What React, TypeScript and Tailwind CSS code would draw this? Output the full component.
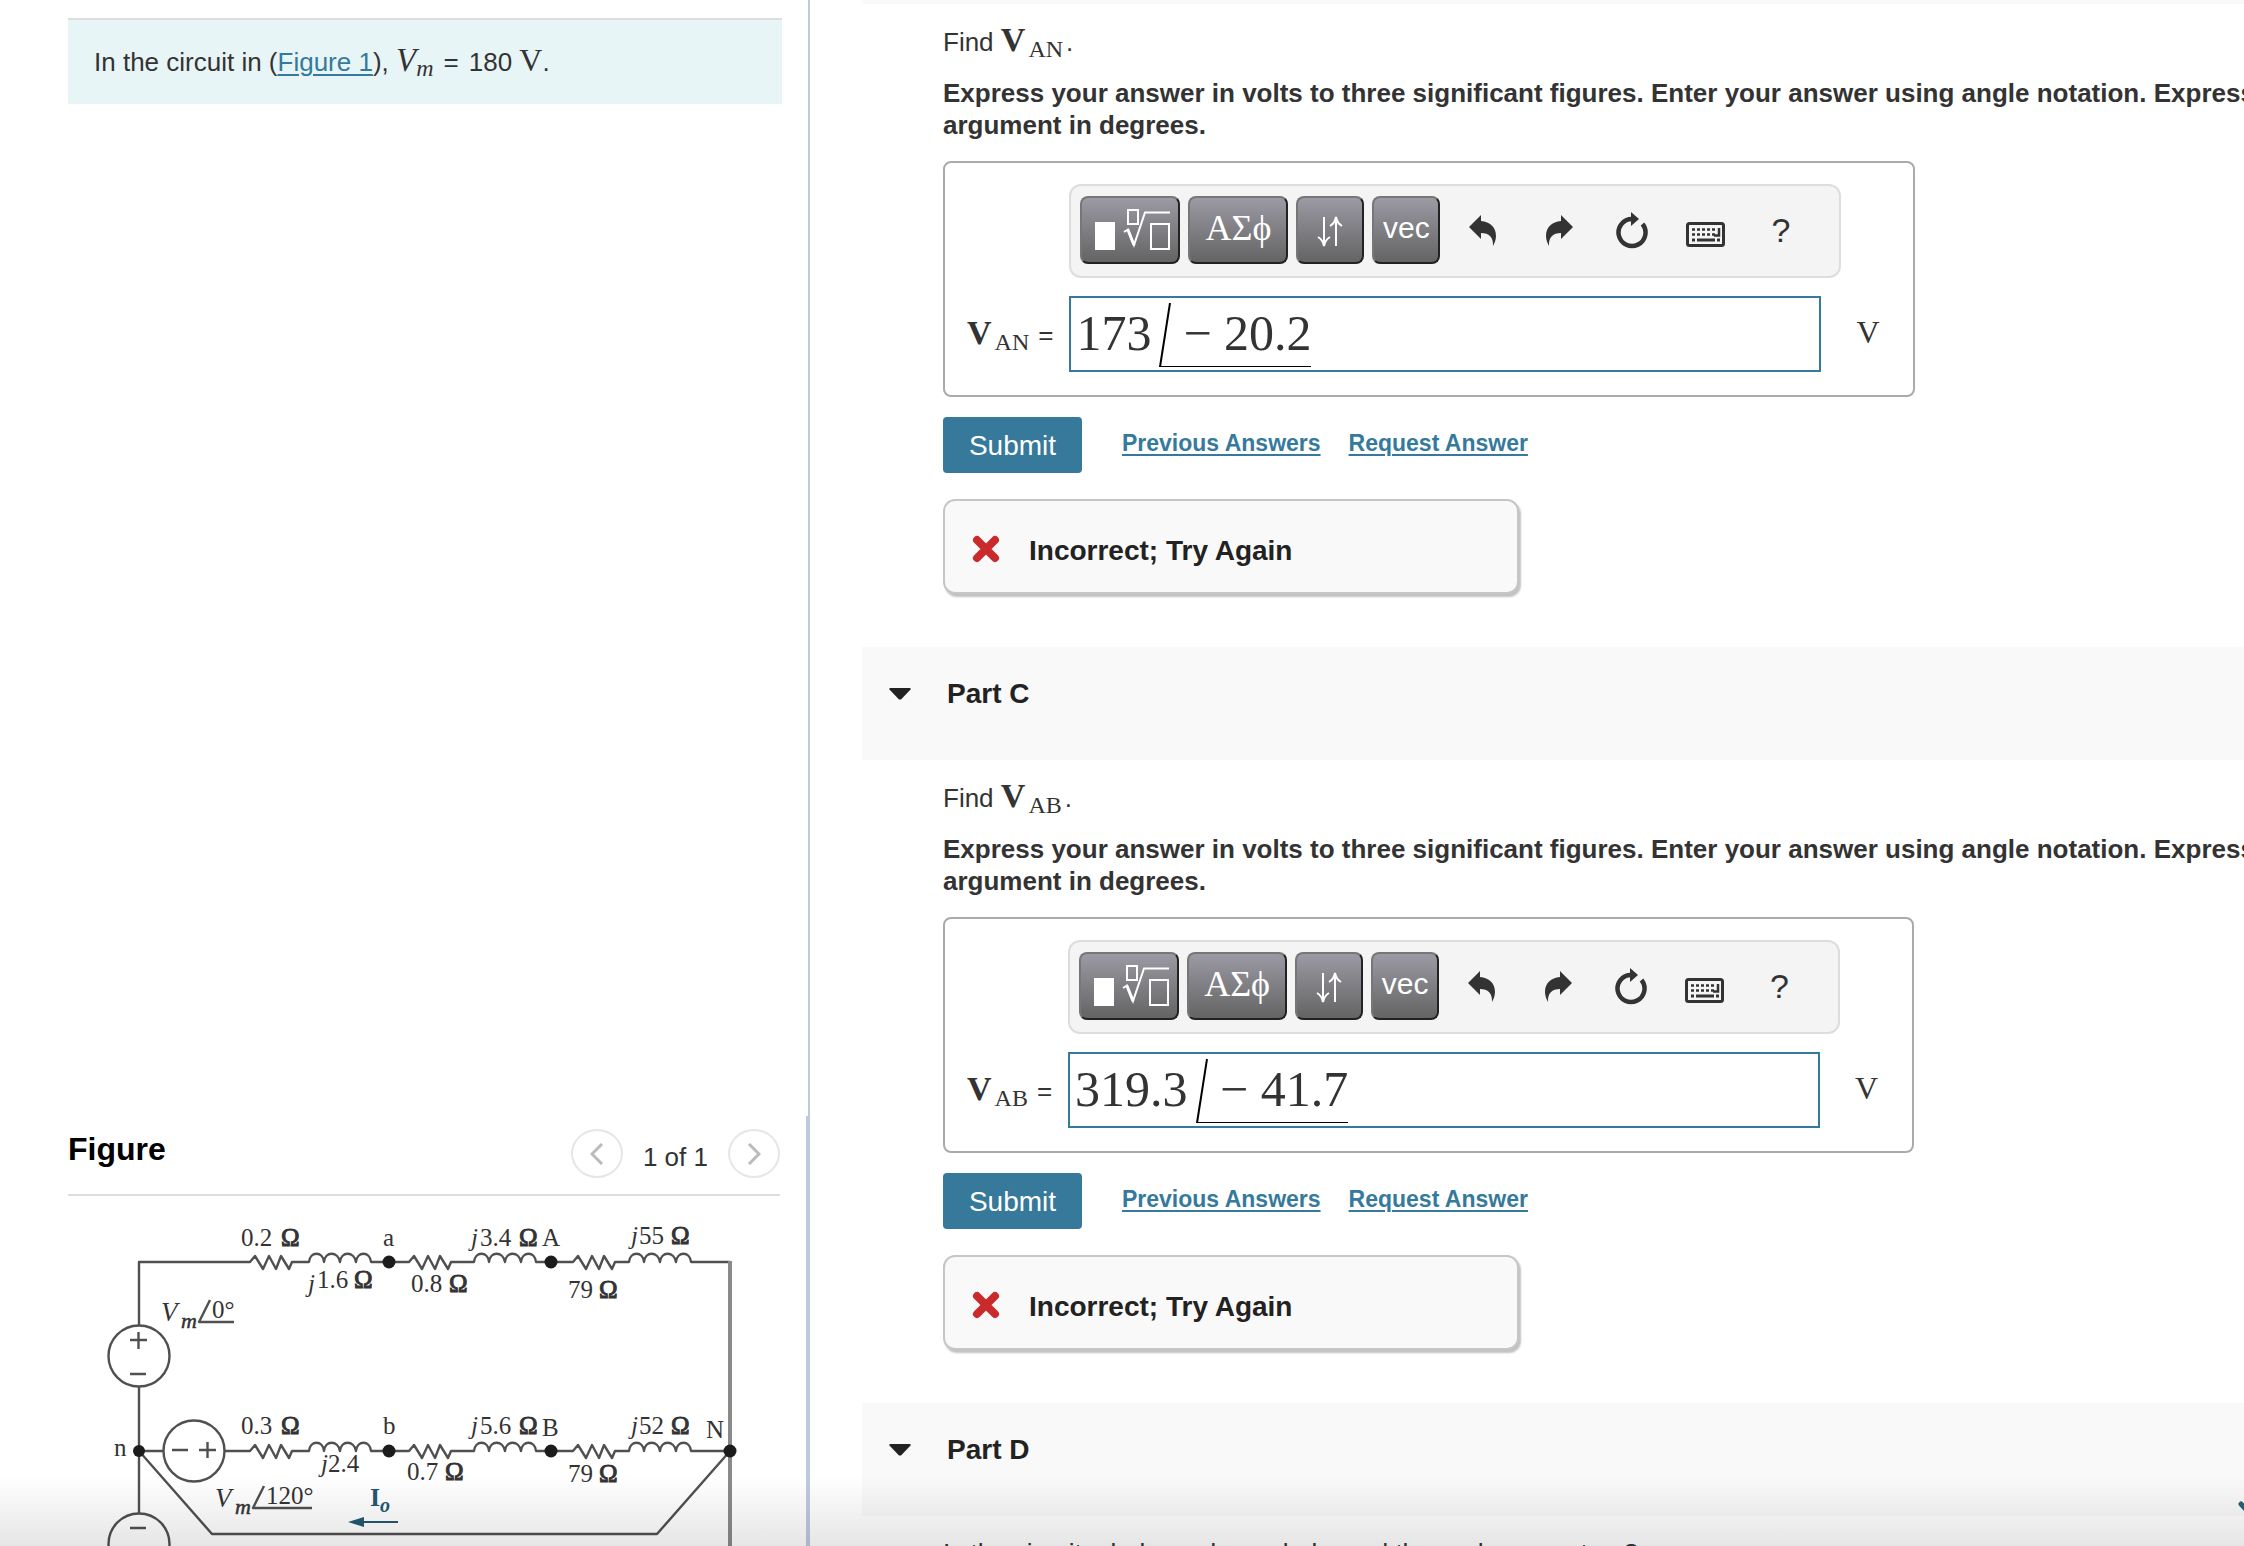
import React, { useState } from 'react';

const SERIF = "font-['Liberation_Serif',serif]";
const RES = 'l5 -6 l8 13 l6 -13 l7 13 l5 -13 l8 13 l3 -7';
const IND = 'c1 -11 14 -11 15 0 c1 -11 14 -11 16 0 c1 -11 14 -11 16 0 c1 -11 14 -11 15 0';

function Ohm({ x, y }: { x: number; y: number }) {
  return (
    <text x={x} y={y} stroke="#333" strokeWidth="1">
      Ω
    </text>
  );
}

function Circuit() {
  return (
    <svg
      viewBox="0 0 700 346"
      className="mt-1 ml-3 block w-[700px] shrink-0 font-['Liberation_Serif',serif]"
      fontSize="25"
      fill="#333"
      role="img"
      aria-label="Circuit diagram"
    >
      <g fill="none" stroke="#505050" strokeWidth="2.400" strokeLinejoin="round">
        <path d={`M59 125 V62 H170 ${RES} H229 ${IND} H329 ${RES} H394 ${IND} H493 ${RES} H549 ${IND} H650`} />
        <path d="M59 187 V313 M59 251 H84" />
        <path d={`M144 251 H170 ${RES} H229 ${IND} H329 ${RES} H394 ${IND} H493 ${RES} H549 ${IND} H650`} />
        <path d="M59 251 L132 334 H577 L650 251" />
        <circle cx="59" cy="156" r="30.5" />
        <circle cx="114" cy="251" r="30.5" />
        <circle cx="59" cy="344" r="30.5" />
        <path d="M50 140 H67 M58.500 132 V149 M50 174 H66 M92 250 H108 M119 250 H136 M127.500 242 V258 M50 328 H66" />
        <path d="M130 100 L119 122 H154 M184 286 L173 308 H232" />
      </g>
      <path d="M650 61 V346" stroke="#8a8a8a" strokeWidth="4" />
      <g fill="#1c1c1c">
        <circle cx="309" cy="62" r="6.500" />
        <circle cx="471" cy="62" r="6.500" />
        <circle cx="59" cy="251" r="6" />
        <circle cx="309" cy="251" r="6.500" />
        <circle cx="471" cy="251" r="6.500" />
        <circle cx="650" cy="251" r="6.500" />
      </g>
      <text x="161" y="46">0.2</text>
      <Ohm x={201} y={46} />
      <text x="303" y="46">a</text>
      <text x="228" y="92" fontStyle="italic">j</text>
      <text x="237" y="88">1.6</text>
      <Ohm x={274} y={88} />
      <text x="331" y="92">0.8</text>
      <Ohm x={369} y={92} />
      <text x="391" y="46" fontStyle="italic">j</text>
      <text x="400" y="46">3.4</text>
      <Ohm x={439} y={46} />
      <text x="462" y="46">A</text>
      <text x="551" y="44" fontStyle="italic">j</text>
      <text x="559" y="44">55</text>
      <Ohm x={591} y={44} />
      <text x="488" y="98">79</text>
      <Ohm x={519} y={98} />
      <text x="81" y="121" fontStyle="italic" fontSize="27">V</text>
      <text x="101" y="128" fontStyle="italic" fontSize="22" stroke="#333" strokeWidth="0.500">m</text>
      <text x="132" y="118">0°</text>
      <text x="34" y="256">n</text>
      <text x="161" y="234">0.3</text>
      <Ohm x={201} y={234} />
      <text x="303" y="234">b</text>
      <text x="241" y="272" fontStyle="italic">j</text>
      <text x="248" y="272">2.4</text>
      <text x="327" y="280">0.7</text>
      <Ohm x={365} y={280} />
      <text x="391" y="234" fontStyle="italic">j</text>
      <text x="400" y="234">5.6</text>
      <Ohm x={439} y={234} />
      <text x="462" y="236">B</text>
      <text x="551" y="234" fontStyle="italic">j</text>
      <text x="559" y="234">52</text>
      <Ohm x={591} y={234} />
      <text x="626" y="238">N</text>
      <text x="488" y="282">79</text>
      <Ohm x={519} y={282} />
      <text x="135" y="307" fontStyle="italic" fontSize="27">V</text>
      <text x="155" y="314" fontStyle="italic" fontSize="22" stroke="#333" strokeWidth="0.500">m</text>
      <text x="186" y="304">120°</text>
      <g fill="#235873">
        <text x="290" y="306" fontWeight="bold" fontSize="26">I</text>
        <text x="300" y="312" fontStyle="italic" fontWeight="bold" fontSize="20">o</text>
        <path d="M268 322 L284 317 V327 Z M280 321 H318 V323 H280 Z" />
      </g>
    </svg>
  );
}

const toolClass =
  'flex h-[68px] items-center justify-center rounded-lg border-2 border-t-[#777] border-l-[#777] border-r-[#222] border-b-[#222] bg-linear-to-b from-[#9c9aa4] to-[#646464] text-white';

function Toolbar() {
  return (
    <div
      role="toolbar"
      aria-label="Equation tools"
      className="flex h-[94px] w-[772px] items-start rounded-xl border-2 border-[#ddd] bg-[#f4f4f4] pt-[10px] pl-[9px] text-[#333]"
    >
      <div className="flex gap-2">
        <button type="button" aria-label="Templates" className={`${toolClass} w-[100px]`}>
          <svg width="96" height="64" viewBox="2 2 96 64" fill="none" stroke="#fff" strokeWidth="2">
            <rect x="15" y="26" width="20" height="28" fill="#fff" stroke="none" />
            <rect x="48" y="14" width="10" height="14" />
            <path d="M44 36 L48 33.500 L54 49 L65 16.500 H90" />
            <path d="M48 34 L54 49" strokeWidth="3" />
            <rect x="71" y="28" width="18" height="25" />
          </svg>
        </button>
        <button type="button" aria-label="Symbols" className={`${toolClass} ${SERIF} w-[100px] pb-1 text-[36px] leading-none`}>
          ΑΣϕ
        </button>
        <button type="button" aria-label="Subscript and superscript" className={`${toolClass} w-[68px]`}>
          <svg width="64" height="64" viewBox="2 2 64 64" fill="none" stroke="#fff" strokeWidth="2">
            <path d="M28 21 V49 M40 50 V22" />
            <path d="M22 41 Q27 44 28 50 Q29 44 34 41 M34 30 Q39 27 40 21 Q41 27 46 30" />
          </svg>
        </button>
        <button type="button" className={`${toolClass} w-[68px] pb-1 text-[30px] leading-none`}>
          vec
        </button>
      </div>
      <button type="button" aria-label="Undo" className="ml-[29px] flex h-[68px] items-center">
        <svg width="27" height="31" viewBox="0 0 27 31" fill="currentColor">
          <path d="M0 12 L12 0 V6 C21 7 27 12 27 21 C27 25 25.500 28 24 31 C24.500 22 20 18 12 18 V24 Z" />
        </svg>
      </button>
      <button type="button" aria-label="Redo" className="ml-[50px] flex h-[68px] items-center">
        <svg width="27" height="31" viewBox="0 0 27 31" fill="currentColor">
          <path d="M27 12 L15 0 V6 C6 7 0 12 0 21 C0 25 1.500 28 3 31 C2.500 22 7 18 15 18 V24 Z" />
        </svg>
      </button>
      <button type="button" aria-label="Reset" className="ml-[43px] flex h-[68px] items-center">
        <svg width="32" height="37" viewBox="0 0 32 37" fill="currentColor">
          <path d="M26.500 12 A13.500 13.500 0 1 1 16 7" fill="none" stroke="currentColor" strokeWidth="4.500" />
          <path d="M15 0 L23 7 L15 14 Z" />
        </svg>
      </button>
      <button type="button" aria-label="Keyboard" className="ml-[38px] flex h-[68px] items-center pt-2">
        <svg width="39" height="25" viewBox="0 0 39 25" fill="none" stroke="currentColor">
          <rect x="1.500" y="1.500" width="36" height="22" rx="2" strokeWidth="3" />
          <path d="M6 7.500 H30 M6 12.500 H30" strokeWidth="2.500" strokeDasharray="3 2" />
          <path d="M33 6 V13.500 H28" strokeWidth="2.500" />
          <path d="M6 18 H9 M11 18 H29 M31 18 H34" strokeWidth="3" />
        </svg>
      </button>
      <button type="button" aria-label="Help" className="ml-[46px] h-[68px] text-[34px] leading-none">
        ?
      </button>
    </div>
  );
}

function Phasor({ sub }: { sub: string }) {
  return (
    <span className={SERIF}>
      <b className="text-[34px] leading-none">V</b>
      <span className="ml-[3px] align-[-6px] text-[24px] leading-none">{sub}</span>
    </span>
  );
}

function AnswerField({ sub, magnitude, angle, magWidth }: { sub: string; magnitude: string; angle: string; magWidth: string }) {
  const [mag, setMag] = useState(magnitude);
  const [ang, setAng] = useState(angle);
  return (
    <div className="mt-5 grid w-fit grid-cols-[auto_auto_auto] rounded-lg border-2 border-[#aaa] pt-[21px] pr-8 pb-[23px] pl-[22px]">
      <div className="col-span-2 col-start-2">
        <Toolbar />
      </div>
      <label htmlFor={`mag-${sub}`} className="mt-[18px] h-[76px] pt-5 pr-4 leading-8 whitespace-nowrap">
        <Phasor sub={sub} />
        <span className="ml-[9px]">=</span>
      </label>
      <div className={`${SERIF} mt-[18px] flex h-[76px] w-[752px] items-start border-2 border-[#357a9c] pt-[5px] pl-[5px] text-[50px] text-[#333]`}>
        <input
          id={`mag-${sub}`}
          value={mag}
          onChange={(e) => setMag(e.target.value)}
          className={`h-[60px] ${magWidth} bg-transparent outline-none`}
        />
        <div className="ml-2 flex h-[64px] border-b border-black">
          <svg width="12" height="64" viewBox="0 0 12 64" fill="none" stroke="#000" strokeWidth="2">
            <path d="M1 64 L11 0" />
          </svg>
          <input
            aria-label="Angle"
            value={ang}
            onChange={(e) => setAng(e.target.value)}
            className="ml-3 h-[60px] w-[128px] bg-transparent outline-none"
          />
        </div>
      </div>
      <span className={`${SERIF} mt-[18px] w-[60px] pt-5 pl-[35px] text-[32px] leading-8`}>V</span>
    </div>
  );
}

function PartHeader({ title }: { title: string }) {
  return (
    <button type="button" className="flex h-[113px] w-full items-center gap-9 bg-[#f9f9f9] pb-[19px] pl-[27px] text-left text-[28px] font-bold text-[#222]">
      <svg width="22" height="12" viewBox="0 0 22 12" fill="currentColor">
        <path d="M1 0 H21 L22 1 L12 11.500 H10 L0 1 Z" />
      </svg>
      {title}
    </button>
  );
}

function PartBody(props: { sub: string; magnitude: string; angle: string; magWidth: string }) {
  return (
    <section className="h-[643px] pt-[19px] pl-[81px]">
      <p className="h-8 leading-8 whitespace-nowrap">
        Find <Phasor sub={props.sub} />
        <span className="ml-[3px]">.</span>
      </p>
      <p className="mt-[22px] leading-8 font-bold whitespace-nowrap">
        Express your answer in volts to three significant figures. Enter your answer using angle notation. Express
        <br />
        argument in degrees.
      </p>
      <AnswerField {...props} />
      <div className="mt-5 flex h-14 items-center">
        <button type="button" className="h-14 w-[139px] rounded bg-[#36799b] pt-px text-[28px] text-white">
          Submit
        </button>
        <div className="flex gap-7 pb-1 pl-10 text-[23px] font-bold text-[#357a9c]">
          <a href="#previous" className="underline decoration-2 underline-offset-3">Previous Answers</a>
          <a href="#request" className="underline decoration-2 underline-offset-3">Request Answer</a>
        </div>
      </div>
      <div
        role="status"
        className="mt-[26px] flex h-[95px] w-[576px] items-center rounded-xl border-2 border-[#c6c6c6] bg-[#f9f9f9] pt-2 pl-[27px] text-[28px] font-bold text-[#222] shadow-[2px_3px_2px_#c2c2c2]"
      >
        <svg width="28" height="28" viewBox="0 0 28 28" className="mb-1" stroke="#cb2a2d" strokeWidth="8" strokeLinecap="round">
          <path d="M5 5 L23 23 M23 5 L5 23" />
        </svg>
        <span className="ml-[29px]">Incorrect; Try Again</span>
      </div>
    </section>
  );
}

export default function App() {
  return (
    <div className="relative grid h-screen grid-cols-[810px_1fr] overflow-hidden bg-white font-['Liberation_Sans',sans-serif] text-[26px] text-[#333]">
      <aside className="flex h-screen min-h-0 flex-col overflow-hidden">
        <div className="flex-1 border-r-2 border-[#bccadb] pt-[18px] pr-[26px] pl-[68px]">
          <p className="h-[86px] border-t-2 border-[#ddd] bg-[#e8f5f6] pt-6 pl-[26px] leading-8 whitespace-nowrap">
            In the circuit in (
            <a href="#figure" className="text-[#357a9c] underline decoration-2 underline-offset-3">Figure 1</a>
            ),{' '}
            <span className={SERIF}>
              <i className="text-[33px] leading-none">V</i>
              <i className="align-[-5px] text-[24px] leading-none">m</i>
            </span>
            <span className="mx-[10px]">=</span>
            180 <span className={`${SERIF} text-[32px] leading-none`}>V</span>.
          </p>
        </div>
        <div id="figure" className="h-[430px] shrink-0 overflow-hidden border-r-4 border-[#bdcbde] pl-[68px]">
          <div className="mr-[26px] flex h-20 items-center border-b-2 border-[#ddd]">
            <h2 className="pb-3 text-[32px] leading-none font-bold text-black">Figure</h2>
            <button type="button" aria-label="Previous figure" className="mb-[3px] ml-auto flex h-[49px] w-[52px] items-center justify-center rounded-[50%] border-2 border-[#e6e6e6] text-[#bbb]">
              <svg width="14" height="22" viewBox="0 0 14 22" fill="none" stroke="currentColor" strokeWidth="3">
                <path d="M12 1 L2 11 L12 21" />
              </svg>
            </button>
            <span className="mx-5 pt-1">1 of 1</span>
            <button type="button" aria-label="Next figure" className="mb-[3px] flex h-[49px] w-[52px] items-center justify-center rounded-[50%] border-2 border-[#e6e6e6] text-[#bbb]">
              <svg width="14" height="22" viewBox="0 0 14 22" fill="none" stroke="currentColor" strokeWidth="3">
                <path d="M2 1 L12 11 L2 21" />
              </svg>
            </button>
          </div>
          <Circuit />
        </div>
      </aside>
      <main className="h-screen min-w-0 overflow-hidden pl-[52px]">
        <div className="h-1 bg-[#f9f9f9]" />
        <PartBody sub="AN" magnitude="173" angle="− 20.2" magWidth="w-[75px]" />
        <PartHeader title="Part C" />
        <PartBody sub="AB" magnitude="319.3" angle="− 41.7" magWidth="w-[113px]" />
        <PartHeader title="Part D" />
        <p className="pt-[21px] pl-[81px] leading-8 whitespace-nowrap">
          Is the circuit a balanced or unbalanced three-phase system?
        </p>
      </main>
      <div className="pointer-events-none absolute inset-x-0 bottom-0 h-[70px] bg-linear-to-b from-black/0 to-black/10" />
      <svg className="absolute right-0 bottom-[26px]" width="6" height="20" viewBox="0 0 6 20" fill="none" stroke="#235e79" strokeWidth="5" strokeLinecap="round">
        <path d="M3 4 L12 14" />
      </svg>
    </div>
  );
}
